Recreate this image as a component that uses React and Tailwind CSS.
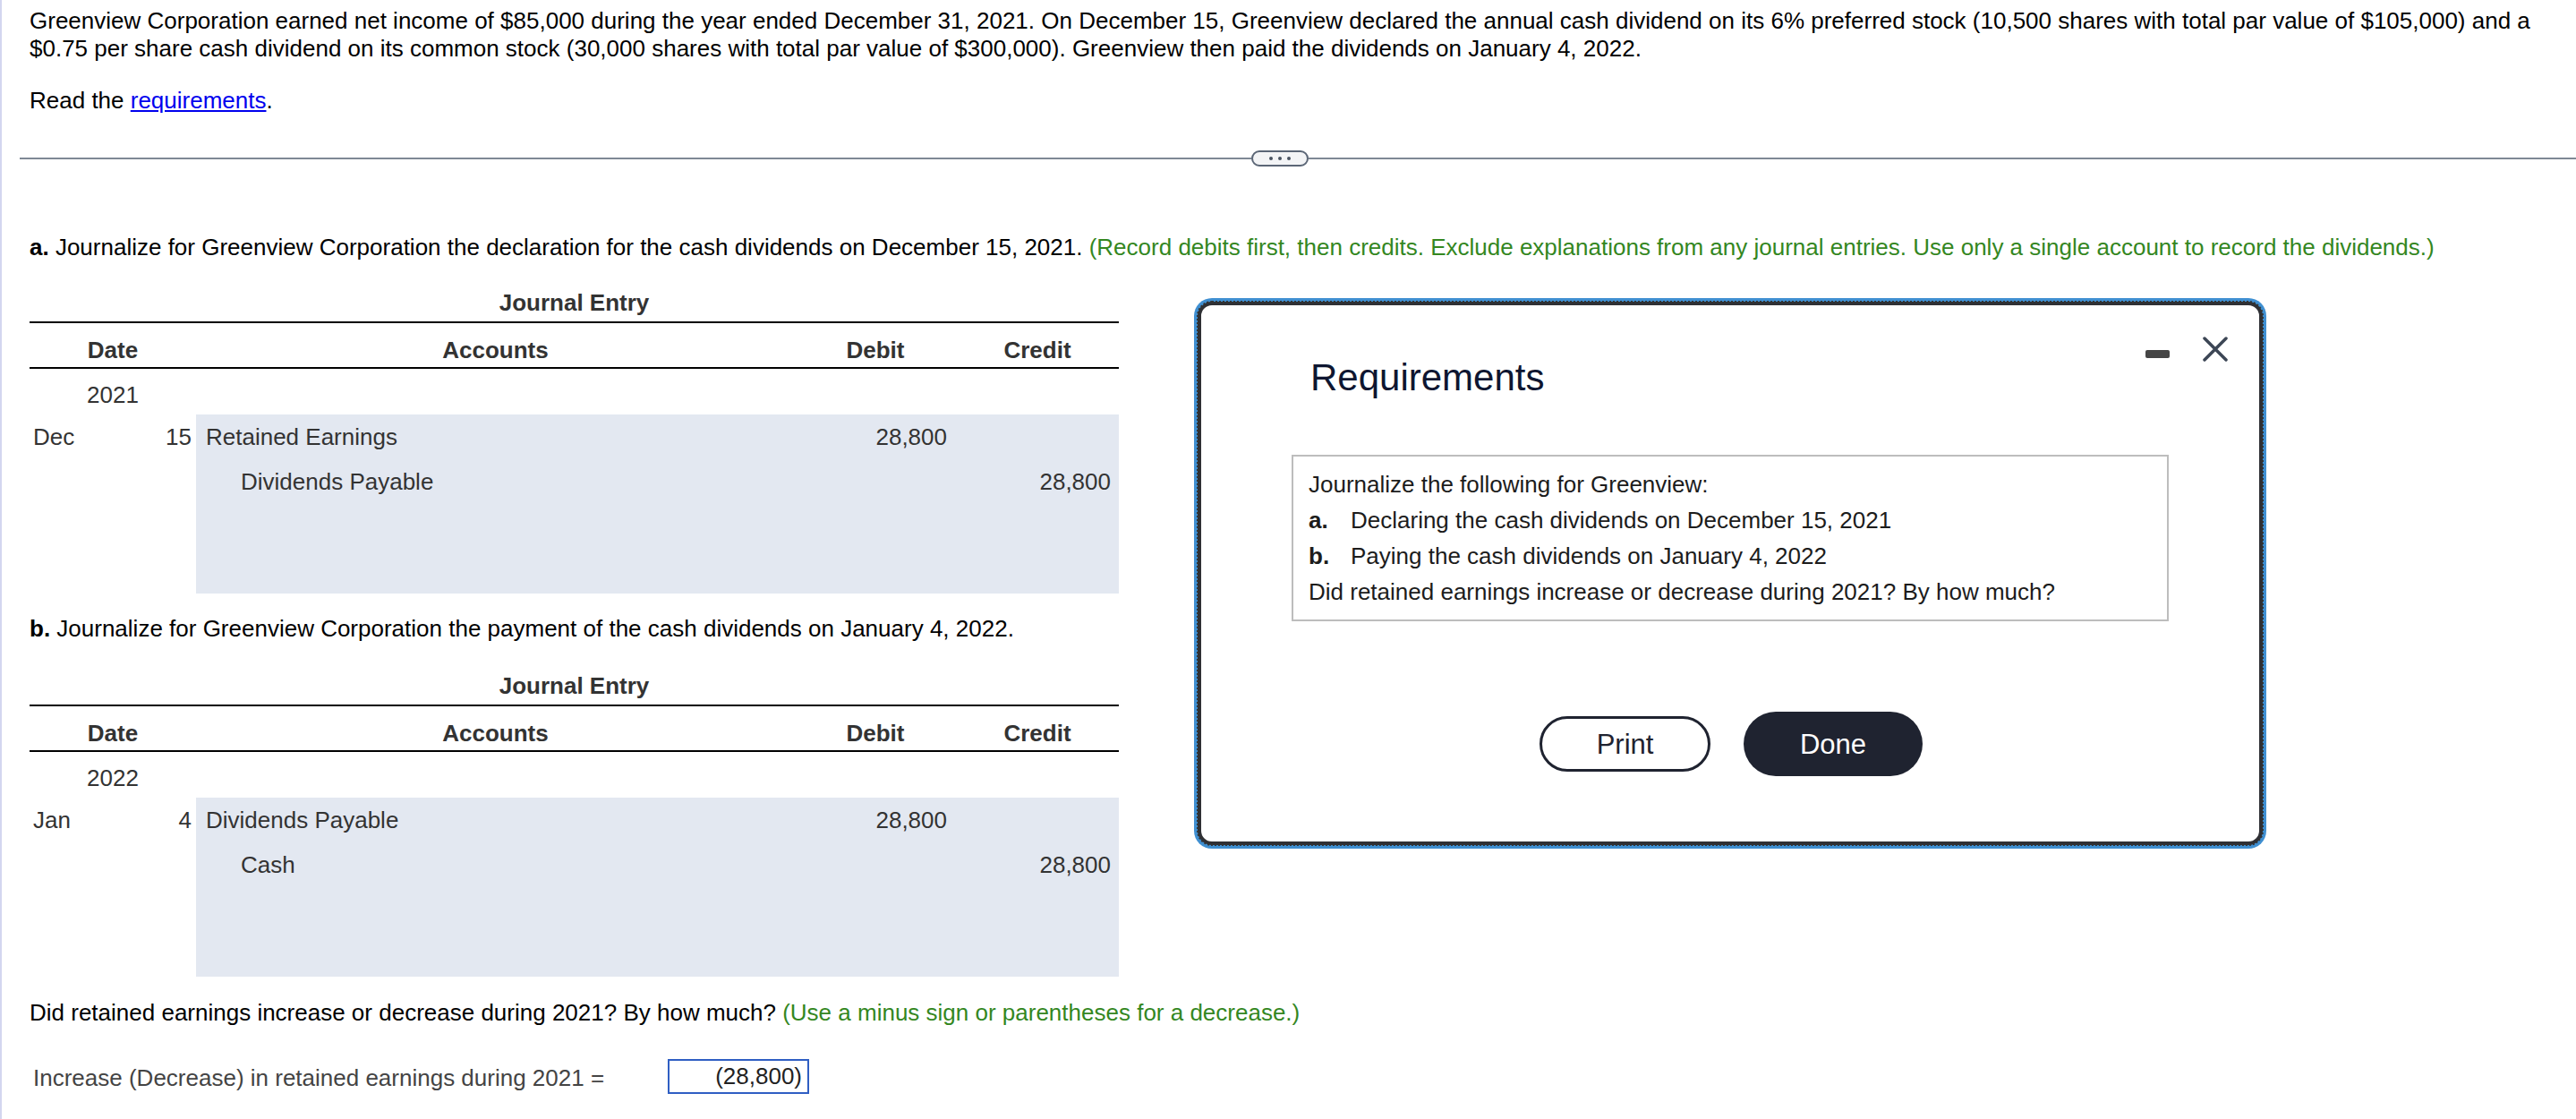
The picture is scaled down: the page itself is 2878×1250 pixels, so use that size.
import React from "react";

const rows = (debitAcct, creditAcct) => [
  { acct: debitAcct, debit: "28,800", credit: "", indent: false },
  { acct: creditAcct, debit: "", credit: "28,800", indent: true },
  { acct: "", debit: "", credit: "", indent: false },
  { acct: "", debit: "", credit: "", indent: false },
];

function JournalTable({ year, month, day, debitAcct, creditAcct }) {
  return (
    <div className="w-[1217px] text-[#333]">
      <div className="text-center font-bold">Journal Entry</div>

      {/* header */}
      <div className="mt-[5px] border-t-2 border-b-2 border-black grid grid-cols-[186px_669px_180px_182px] h-[53px] pt-[15px] font-bold">
        <div className="text-center">Date</div>
        <div className="text-center">Accounts</div>
        <div className="text-center">Debit</div>
        <div className="text-center">Credit</div>
      </div>

      {/* year row */}
      <div className="grid grid-cols-[186px_669px_180px_182px] h-[51px] pt-[14px]">
        <div className="text-center">{year}</div>
      </div>

      {rows(debitAcct, creditAcct).map((r, i) => (
        <div key={i} className="grid grid-cols-[186px_669px_180px_182px] h-[50px] items-center">
          <div className="h-full flex items-center justify-between pl-[4px] pr-[5px]">
            <span>{i === 0 ? month : ""}</span>
            <span>{i === 0 ? day : ""}</span>
          </div>
          <div className={`h-full flex items-center bg-[#e3e8f1] ${r.indent ? "pl-[50px]" : "pl-[11px]"}`}>{r.acct}</div>
          <div className="h-full flex items-center justify-end bg-[#e3e8f1] pr-[10px]">{r.debit}</div>
          <div className="h-full flex items-center justify-end bg-[#e3e8f1] pr-[9px]">{r.credit}</div>
        </div>
      ))}
    </div>
  );
}

function RequirementsModal() {
  return (
    <div className="absolute left-[1336px] top-[337px] w-[1190px] h-[607px] bg-white border-4 border-[#2f3034] rounded-[16px] shadow-[0_0_0_4px_#3f8fd1] outline-2 outline-dotted outline-[#333] outline-offset-[-1px]">
      {/* window controls */}
      <div className="absolute left-[1055px] top-[50px] w-[27px] h-[9px] rounded-[2px] bg-[#454545]" />
      <svg className="absolute left-[1119px] top-[35px]" width="28" height="28" viewBox="0 0 28 28">
        <path d="M2 2 L26 26 M26 2 L2 26" stroke="#3c4655" strokeWidth="3.5" strokeLinecap="round" fill="none" />
      </svg>

      <div className="pl-[101px] pt-[56px]">
        <h2 className="ml-[21px] text-[42px] leading-[50px] text-[#0e1631]">Requirements</h2>

        <div className="mt-[61px] w-[980px] h-[186px] border-2 border-[#bdbdbd] pl-[17px] pt-[11px] text-[26px] leading-[40px] text-[#1c1c1c]">
          <div>Journalize the following for Greenview:</div>
          <div className="flex">
            <span className="w-[47px] font-bold">a.</span>
            <span>Declaring the cash dividends on December 15, 2021</span>
          </div>
          <div className="flex">
            <span className="w-[47px] font-bold">b.</span>
            <span>Paying the cash dividends on January 4, 2022</span>
          </div>
          <div>Did retained earnings increase or decrease during 2021? By how much?</div>
        </div>
      </div>

      <div className="mt-[101px] flex justify-center items-center gap-[37px] pl-[2px]">
        <button className="w-[191px] h-[62px] rounded-full border-[3px] border-[#1f2330] bg-white text-[31px] text-[#1f2330]">
          Print
        </button>
        <button className="w-[200px] h-[72px] rounded-full bg-[#1f2330] text-[31px] text-white">
          Done
        </button>
      </div>
    </div>
  );
}

export default function App() {
  return (
    <div className="relative w-[2878px] h-[1250px] overflow-hidden bg-white border-l-2 border-[#d3d6ef] font-['Liberation_Sans',Arial,sans-serif] text-[26px] leading-[31px] text-black">
      <div className="pl-[31px] pt-[8px]">
        <p className="whitespace-nowrap">
          Greenview Corporation earned net income of $85,000 during the year ended December 31, 2021. On December 15, Greenview declared the annual cash dividend on its 6% preferred stock (10,500 shares with total par value of $105,000) and a
          <br />
          $0.75 per share cash dividend on its common stock (30,000 shares with total par value of $300,000). Greenview then paid the dividends on January 4, 2022.
        </p>

        <p className="mt-[27px]">
          Read the <span className="text-[#0000ee] underline">requirements</span>.
        </p>

        {/* divider */}
        <div className="mt-[40px] -ml-[11px] flex items-center h-[18px]">
          <div className="w-[1376px] h-[2px] bg-[#7f8895]" />
          <div className="w-[64px] h-[18px] rounded-full border-2 border-[#5b6676] bg-[#f3f4f6] flex items-center justify-center gap-[6px]">
            <span className="w-[4px] h-[4px] rounded-full bg-[#4a5361]" />
            <span className="w-[4px] h-[4px] rounded-full bg-[#4a5361]" />
            <span className="w-[4px] h-[4px] rounded-full bg-[#4a5361]" />
          </div>
          <div className="flex-1 h-[2px] bg-[#7f8895]" />
        </div>

        <p className="mt-[75px]">
          <span className="font-bold">a.</span> Journalize for Greenview Corporation the declaration for the cash dividends on December 15, 2021.{" "}
          <span className="text-[#34871f]">
            (Record debits first, then credits. Exclude explanations from any journal entries. Use only a single account to record the dividends.)
          </span>
        </p>

        <div className="mt-[31px]">
          <JournalTable year="2021" month="Dec" day="15" debitAcct="Retained Earnings" creditAcct="Dividends Payable" />
        </div>

        <p className="mt-[24px]">
          <span className="font-bold">b.</span> Journalize for Greenview Corporation the payment of the cash dividends on January 4, 2022.
        </p>

        <div className="mt-[33px]">
          <JournalTable year="2022" month="Jan" day="4" debitAcct="Dividends Payable" creditAcct="Cash" />
        </div>

        <p className="mt-[25px]">
          Did retained earnings increase or decrease during 2021? By how much?{" "}
          <span className="text-[#34871f]">(Use a minus sign or parentheses for a decrease.)</span>
        </p>

        <div className="mt-[36px] flex items-center h-[39px]">
          <div className="w-[713px] pl-[4px] pt-[4px] text-[#444]">Increase (Decrease) in retained earnings during 2021 =</div>
          <div className="w-[158px] h-[39px] border-2 border-[#2f5ec3] text-right pr-[6px] leading-[35px] text-[#222]">(28,800)</div>
        </div>
      </div>

      <RequirementsModal />
    </div>
  );
}
